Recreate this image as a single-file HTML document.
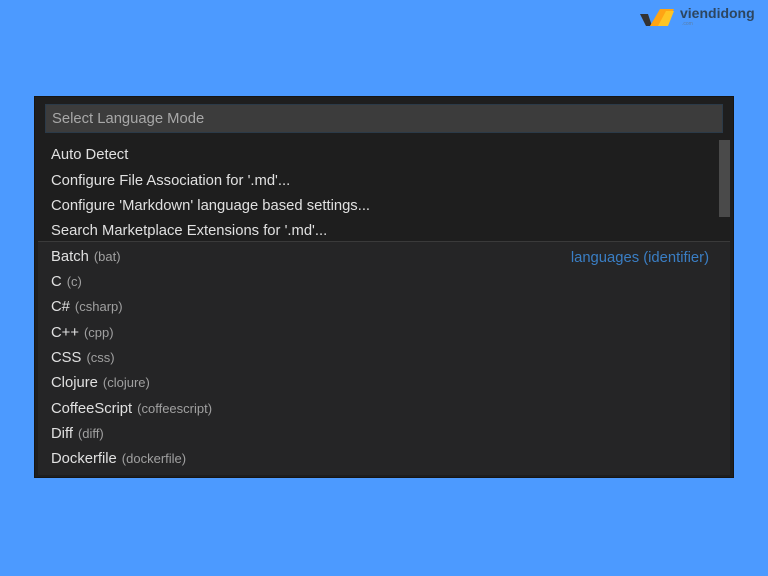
<!DOCTYPE html>
<html><head><meta charset="utf-8"><style>
body{margin:0;width:768px;height:576px;background:#4c9aff;position:relative;overflow:hidden;font-family:"Liberation Sans","DejaVu Sans",sans-serif}
.panel{position:absolute;left:34px;top:96px;width:700px;height:382px;background:#1e1e1e;border:1px solid #151515;box-sizing:border-box}
.inp{position:absolute;left:10px;top:7px;width:678px;height:29px;background:#3c3c3c;border:1px solid #2b3a48;box-sizing:border-box;color:#a8a8a8;font-size:14.8px;line-height:29px;padding-left:6px}
.lower{position:absolute;left:3px;top:144px;width:692px;height:233px;background:#252526;border-top:1px solid #3a3a3a}
.row{position:absolute;left:16px;color:#e0e0e0;font-size:14.8px;white-space:nowrap}
.row span{color:#a0a0a0;font-size:13px;margin-left:5px}
.sb{position:absolute;left:684px;top:43px;width:11px;height:77px;background:#4a4a4a}
.lab{position:absolute;right:24px;top:153px;color:#3a7ec4;font-size:14.8px}
</style></head><body>
<svg style="position:absolute;left:640px;top:6px" width="40" height="22"><path d="M0 8 L8 8 L12 20 L6 20 Z" fill="#333"/><path d="M10 20 L20 3 L34 3 L24 20 Z" fill="#ffa414"/><path d="M18 20 L26 5 L34 5 L28 20Z" fill="#ffc524"/></svg>
<div style="position:absolute;left:680px;top:5px;color:#2d4660;font-size:14px;font-weight:bold">viendidong</div>
<div style="position:absolute;left:682px;top:21px;color:#5a7fa8;font-size:5px">.com</div>
<div class="panel">
<div class="inp">Select Language Mode</div>
<div class="lower"></div>
<div class="sb"></div>
<div class="row" style="top:50px">Auto Detect</div>
<div class="row" style="top:76px">Configure File Association for '.md'...</div>
<div class="row" style="top:101px">Configure 'Markdown' language based settings...</div>
<div class="row" style="top:126px">Search Marketplace Extensions for '.md'...</div>
<div class="row" style="top:152px">Batch<span>(bat)</span></div>
<div class="lab">languages (identifier)</div>
<div class="row" style="top:177px">C<span>(c)</span></div>
<div class="row" style="top:202px">C#<span>(csharp)</span></div>
<div class="row" style="top:228px">C++<span>(cpp)</span></div>
<div class="row" style="top:253px">CSS<span>(css)</span></div>
<div class="row" style="top:278px">Clojure<span>(clojure)</span></div>
<div class="row" style="top:304px">CoffeeScript<span>(coffeescript)</span></div>
<div class="row" style="top:329px">Diff<span>(diff)</span></div>
<div class="row" style="top:354px">Dockerfile<span>(dockerfile)</span></div>
</div>
</body></html>
